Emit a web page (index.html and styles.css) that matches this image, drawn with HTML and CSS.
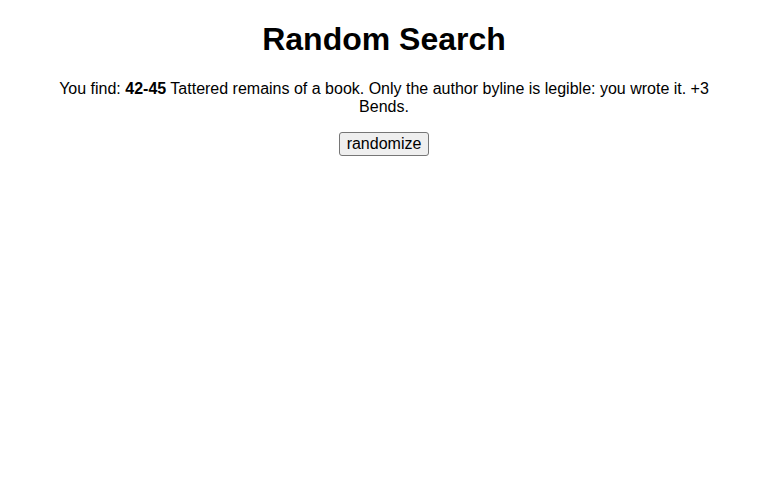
FILE: index.html
```html
<html>
<head>
  <title>Random Search</title>
  <link rel="stylesheet" href="styles.css">
</head>
<body>
  <div class="page">
    <h1 class="title">Random Search</h1>
    <p class="result">You find: <b>42-45</b> Tattered remains of a book. Only the author byline is legible: you wrote it. +3 Bends.</p>
    <button class="roll">randomize</button>
  </div>
</body>
</html>
```
FILE: styles.css
```css
body {
  font-family: "Liberation Sans", Arial, sans-serif;
  margin: 0;
  background: #fff;
  color: #000;
}

.page {
  max-width: 690px;
  margin: 0 auto;
  text-align: center;
}

.title {
  font-size: 32px;
  margin: 21px 0;
}

.result {
  font-size: 16px;
  margin: 22px 0 16px;
}

.roll {
  font-family: "Liberation Sans", Arial, sans-serif;
  font-size: 16px;
  padding: 2px 7px;
  background: #efefef;
  border: 1px solid #767676;
  border-radius: 3px;
  color: #000;
}
```
